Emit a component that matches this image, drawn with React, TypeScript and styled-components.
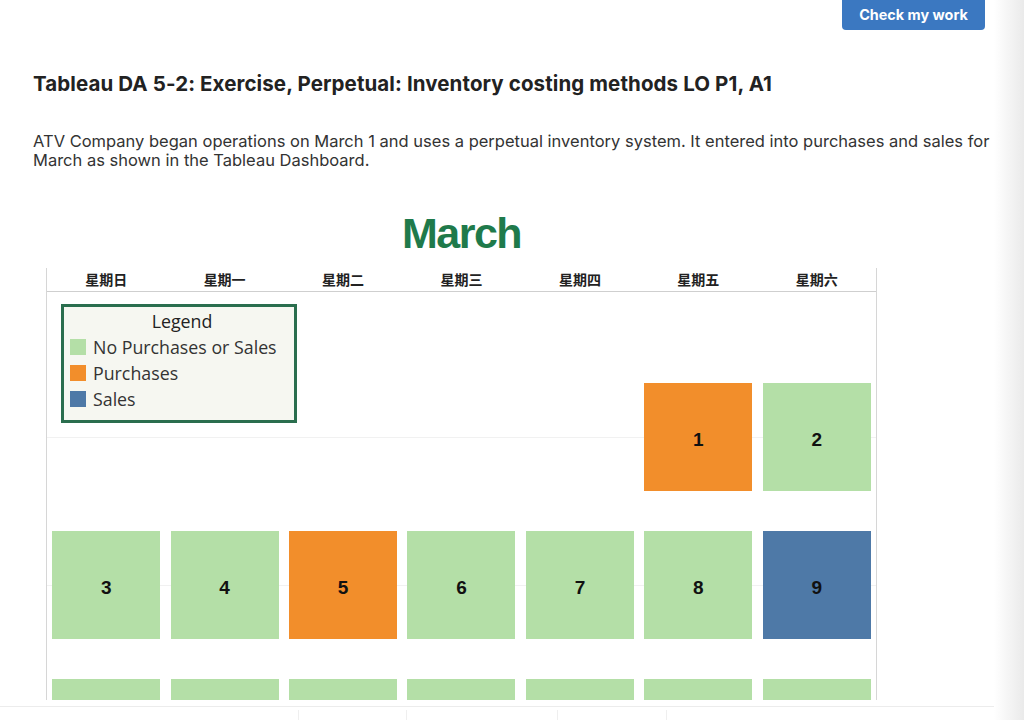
import React from 'react';
import styled, { createGlobalStyle } from 'styled-components';

type DayKind = 'none' | 'purchase' | 'sale';

const KIND_COLORS: Record<DayKind, string> = {
  none: '#b4dfa7',
  purchase: '#f28e2b',
  sale: '#4e79a7',
};

const WEEKDAYS = ['星期日', '星期一', '星期二', '星期三', '星期四', '星期五', '星期六'];

// null = blank slot before the 1st; the last week is cut by the frame, so no labels show
const WEEKS: ({ day?: number; kind: DayKind } | null)[][] = [
  [null, null, null, null, null, { day: 1, kind: 'purchase' }, { day: 2, kind: 'none' }],
  [
    { day: 3, kind: 'none' },
    { day: 4, kind: 'none' },
    { day: 5, kind: 'purchase' },
    { day: 6, kind: 'none' },
    { day: 7, kind: 'none' },
    { day: 8, kind: 'none' },
    { day: 9, kind: 'sale' },
  ],
  [
    { kind: 'none' },
    { kind: 'none' },
    { kind: 'none' },
    { kind: 'none' },
    { kind: 'none' },
    { kind: 'none' },
    { kind: 'none' },
  ],
];

const GlobalStyle = createGlobalStyle`
  html, body {
    margin: 0;
    padding: 0;
    background: #fff;
  }

  body {
    font-family: Inter, Lato, "Liberation Sans", sans-serif;
    color: #333;
  }
`;

const Page = styled.div`
  display: flex;
  width: 1024px;
  height: 720px;
  overflow: hidden;
`;

const Main = styled.div`
  flex: 1;
  display: flex;
  flex-direction: column;
  min-width: 0;
`;

const EdgeShade = styled.div`
  width: 30px;
  background: linear-gradient(to right, #ffffff, #eaeaea);
`;

const TopBar = styled.div`
  display: flex;
  justify-content: flex-end;
  padding-right: 9px;
`;

const CheckButton = styled.button`
  margin-top: -6px;
  width: 143px;
  height: 36px;
  padding-top: 5px;
  border: none;
  border-radius: 4px;
  background: #3b78c1;
  color: #fff;
  font-family: Inter, Lato, sans-serif;
  font-weight: 700;
  font-size: 14.4px;
  cursor: pointer;
`;

const Content = styled.div`
  padding-left: 33px;
`;

const Title = styled.h1`
  margin: 42px 0 0;
  font-size: 20.5px;
  line-height: 24px;
  letter-spacing: 0.1px;
  font-weight: 700;
  color: #222;
`;

const Intro = styled.p`
  margin: 36px 0 0;
  font-size: 16.5px;
  line-height: 19px;
  color: #333;
`;

const Dashboard = styled.div`
  margin: 39px 0 0 13px;
  width: 831px;
`;

const MonthTitle = styled.div`
  text-align: center;
  font-family: "Liberation Sans", Arial, sans-serif;
  font-weight: 700;
  font-size: 43px;
  line-height: 48px;
  letter-spacing: -1.5px;
  color: #1f7a4b;
  margin-bottom: 11px;
`;

const Calendar = styled.div`
  border-left: 1px solid #d6d6d6;
  border-right: 1px solid #d6d6d6;
`;

const WeekHeader = styled.div`
  display: grid;
  grid-template-columns: repeat(7, 1fr);
  height: 23px;
  border-bottom: 1px solid #cfcfcf;
`;

const WeekdayLabel = styled.div`
  padding-top: 1px;
  text-align: center;
  font-family: "Liberation Sans", "Noto Sans CJK SC", sans-serif;
  font-weight: 700;
  font-size: 14px;
  line-height: 23px;
  color: #222;
`;

const CalendarBody = styled.div`
  position: relative;
  height: 408px;
  overflow: hidden;
  padding-top: 91px;
  box-sizing: border-box;
  display: flex;
  flex-direction: column;
  gap: 40px;
`;

const WeekRow = styled.div`
  position: relative;
  display: grid;
  grid-template-columns: repeat(7, 1fr);
  flex-shrink: 0;
  height: 108px;

  &::before {
    content: "";
    position: absolute;
    left: 0;
    right: 0;
    top: 50%;
    height: 1px;
    background: #f1f1f1;
  }
`;

const DayCell = styled.div<{ $kind: DayKind }>`
  position: relative;
  justify-self: center;
  width: 108px;
  height: 108px;
  padding-top: 5px;
  box-sizing: border-box;
  display: flex;
  align-items: center;
  justify-content: center;
  background: ${({ $kind }) => KIND_COLORS[$kind]};
  font-family: "Liberation Sans", Arial, sans-serif;
  font-weight: 700;
  font-size: 19px;
  color: #111;
`;

const Legend = styled.div`
  position: absolute;
  top: 12px;
  left: 14px;
  width: 236px;
  height: 119px;
  box-sizing: border-box;
  border: 3px solid #2a6e4e;
  background: #f6f7f1;
  padding: 1px 0 0 6px;
  font-family: "Open Sans", "Noto Sans", sans-serif;
  font-size: 17.8px;
  color: #333;
`;

const LegendTitle = styled.div`
  text-align: center;
  line-height: 26px;
  color: #222;
`;

const LegendItem = styled.div`
  display: flex;
  align-items: center;
  gap: 7px;
  height: 26px;
`;

const Swatch = styled.span<{ $kind: DayKind }>`
  width: 16px;
  height: 16px;
  background: ${({ $kind }) => KIND_COLORS[$kind]};
`;

const Footer = styled.div`
  margin-top: 6px;
  flex: 1;
  display: grid;
  grid-template-columns: 298px 108px 151px 109px 1fr;
  border-top: 1px solid #ececec;
  padding-top: 3px;
`;

const FooterCell = styled.div<{ $divider?: boolean }>`
  border-left: ${({ $divider }) => ($divider ? '1px solid #efefef' : 'none')};
`;

function App() {
  return (
    <Page>
      <GlobalStyle />
      <Main>
        <TopBar>
          <CheckButton>Check my work</CheckButton>
        </TopBar>

        <Content>
          <Title>Tableau DA 5-2: Exercise, Perpetual: Inventory costing methods LO P1, A1</Title>
          <Intro>
            ATV Company began operations on March 1 and uses a perpetual inventory system. It entered into
            purchases and sales for March as shown in the Tableau Dashboard.
          </Intro>

          <Dashboard>
            <MonthTitle>March</MonthTitle>
            <Calendar>
              <WeekHeader>
                {WEEKDAYS.map((d) => (
                  <WeekdayLabel key={d}>{d}</WeekdayLabel>
                ))}
              </WeekHeader>

              <CalendarBody>
                {WEEKS.map((week, i) => (
                  <WeekRow key={i}>
                    {week.map((cell, j) =>
                      cell ? (
                        <DayCell key={j} $kind={cell.kind}>
                          {cell.day}
                        </DayCell>
                      ) : (
                        <div key={j} />
                      )
                    )}
                  </WeekRow>
                ))}

                <Legend>
                  <LegendTitle>Legend</LegendTitle>
                  <LegendItem>
                    <Swatch $kind="none" />
                    No Purchases or Sales
                  </LegendItem>
                  <LegendItem>
                    <Swatch $kind="purchase" />
                    Purchases
                  </LegendItem>
                  <LegendItem>
                    <Swatch $kind="sale" />
                    Sales
                  </LegendItem>
                </Legend>
              </CalendarBody>
            </Calendar>
          </Dashboard>
        </Content>

        <Footer>
          <FooterCell />
          <FooterCell $divider />
          <FooterCell $divider />
          <FooterCell $divider />
          <FooterCell $divider />
        </Footer>
      </Main>
      <EdgeShade />
    </Page>
  );
}

export default App;
